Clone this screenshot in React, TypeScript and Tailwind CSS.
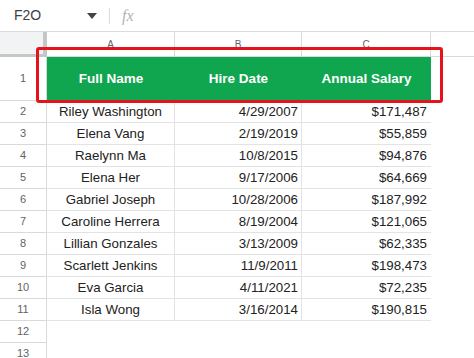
import React from "react";

interface Employee {
  name: string;
  hired: string;
  salary: string;
}

const employees: Employee[] = [
  { name: "Riley Washington", hired: "4/29/2007", salary: "$171,487" },
  { name: "Elena Vang", hired: "2/19/2019", salary: "$55,859" },
  { name: "Raelynn Ma", hired: "10/8/2015", salary: "$94,876" },
  { name: "Elena Her", hired: "9/17/2006", salary: "$64,669" },
  { name: "Gabriel Joseph", hired: "10/28/2006", salary: "$187,992" },
  { name: "Caroline Herrera", hired: "8/19/2004", salary: "$121,065" },
  { name: "Lillian Gonzales", hired: "3/13/2009", salary: "$62,335" },
  { name: "Scarlett Jenkins", hired: "11/9/2011", salary: "$198,473" },
  { name: "Eva Garcia", hired: "4/11/2021", salary: "$72,235" },
  { name: "Isla Wong", hired: "3/16/2014", salary: "$190,815" },
];

function RowNumber({ n, tall }: { n: number; tall?: boolean }) {
  return (
    <div
      className={`w-[47px] shrink-0 flex items-center justify-center border-r border-b border-[#d9dadc] text-[11px] text-[#5f6368] ${
        tall ? "h-[44px]" : "h-[22px]"
      }`}
    >
      {n}
    </div>
  );
}

export default function App() {
  return (
    <div
      className="w-[474px] h-[358px] overflow-hidden bg-white text-[#222]"
      style={{ fontFamily: '"Liberation Sans", Arial, sans-serif' }}
    >
      {/* name box + formula bar */}
      <div className="h-[32px] flex items-center border-b border-[#dadce0]">
        <span className="ml-[14px] w-[62px] text-[14px] text-[#3c4043]">F2O</span>
        <svg width="10" height="6" viewBox="0 0 10 6" className="ml-[11px]">
          <path d="M0 0h10L5 6z" fill="#444" />
        </svg>
        <div className="ml-[12px] w-px h-[16px] bg-[#dadce0]" />
        <span
          className="ml-[12px] text-[16px] italic text-[#b0b3b8]"
          style={{ fontFamily: '"Liberation Serif", serif' }}
        >
          fx
        </span>
      </div>

      <div className="relative">
        {/* column headers */}
        <div className="flex h-[25px]">
          <div className="w-[47px] shrink-0 bg-[#f1f3f4] border-r-4 border-b-[3px] border-[#c4c7c5]" />
          {["A", "B", "C"].map((c, i) => (
            <div
              key={c}
              className={`${
                i === 0 ? "w-[128px]" : i === 1 ? "w-[127px]" : "w-[129px]"
              } shrink-0 flex items-center justify-center border-r border-b border-[#d9dadc] text-[10px] text-[#5f6368]`}
            >
              {c}
            </div>
          ))}
          <div className="flex-1 border-b border-[#d9dadc]" />
        </div>

        {/* header row */}
        <div className="flex">
          <RowNumber n={1} tall />
          <div className="w-[384px] h-[44px] flex bg-[#0fa64f] text-white font-bold text-[13.5px]">
            <div className="w-[128px] flex items-center justify-center">Full Name</div>
            <div className="w-[127px] flex items-center justify-center">Hire Date</div>
            <div className="w-[129px] flex items-center justify-center">Annual Salary</div>
          </div>
        </div>

        {/* data */}
        {employees.map((e, i) => (
          <div key={e.name} className="flex">
            <RowNumber n={i + 2} />
            <div className="w-[128px] h-[22px] flex items-center justify-center border-r border-b border-[#e3e3e3] text-[13.3px]">
              {e.name}
            </div>
            <div className="w-[127px] h-[22px] flex items-center justify-end pr-[3px] border-r border-b border-[#e3e3e3] text-[13.3px]">
              {e.hired}
            </div>
            <div className="w-[129px] h-[22px] flex items-center justify-end pr-[4px] border-b border-[#e3e3e3] text-[13.3px]">
              {e.salary}
            </div>
          </div>
        ))}
        <RowNumber n={12} />
        <RowNumber n={13} />

        {/* highlight box */}
        <div className="absolute left-[36px] top-[15px] w-[407px] h-[56px] border-[3px] border-[#e5141c] rounded-[3px]" />
      </div>
    </div>
  );
}
